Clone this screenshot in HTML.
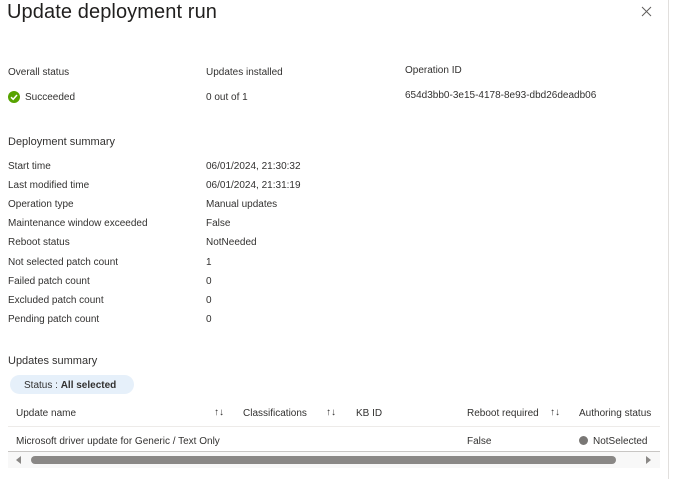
<!DOCTYPE html>
<html><head><style>
body{margin:0;width:678px;height:479px;background:#fff;font-family:"Liberation Sans",sans-serif;color:#323130;position:relative;overflow:hidden}
.a{position:absolute;font-size:10px;white-space:nowrap;margin-top:1px}
.h{font-size:11px;font-weight:normal}
</style></head><body>
<div style="position:absolute;left:668px;top:0;width:1px;height:479px;background:#e1dfdd"></div>
<div class="a" style="left:7px;top:0px;font-size:20px;color:#201f1e;letter-spacing:0.1px">Update deployment run</div>
<svg style="position:absolute;left:641px;top:6px" width="11" height="11"><path d="M1 1L10 10M10 1L1 10" stroke="#605e5c" stroke-width="1"/></svg>
<div class="a" style="left:8px;top:66px">Overall status</div>
<div class="a" style="left:206px;top:66px">Updates installed</div>
<div class="a" style="left:405px;top:64px">Operation ID</div>
<svg style="position:absolute;left:8px;top:91px" width="12" height="12"><circle cx="6" cy="6" r="6" fill="#57a300"/><path d="M3 6.2L5.2 8.3L9 4" stroke="#fff" stroke-width="1.5" fill="none"/></svg>
<div class="a" style="left:25px;top:91px">Succeeded</div>
<div class="a" style="left:206px;top:91px">0 out of 1</div>
<div class="a" style="left:405px;top:89px">654d3bb0-3e15-4178-8e93-dbd26deadb06</div>
<div class="a h" style="left:8px;top:135px">Deployment summary</div>
<div class="a" style="left:8px;top:160px">Start time</div><div class="a" style="left:206px;top:160px">06/01/2024, 21:30:32</div>
<div class="a" style="left:8px;top:179px">Last modified time</div><div class="a" style="left:206px;top:179px">06/01/2024, 21:31:19</div>
<div class="a" style="left:8px;top:198px">Operation type</div><div class="a" style="left:206px;top:198px">Manual updates</div>
<div class="a" style="left:8px;top:217px">Maintenance window exceeded</div><div class="a" style="left:206px;top:217px">False</div>
<div class="a" style="left:8px;top:236px">Reboot status</div><div class="a" style="left:206px;top:236px">NotNeeded</div>
<div class="a" style="left:8px;top:256px">Not selected patch count</div><div class="a" style="left:206px;top:256px">1</div>
<div class="a" style="left:8px;top:275px">Failed patch count</div><div class="a" style="left:206px;top:275px">0</div>
<div class="a" style="left:8px;top:294px">Excluded patch count</div><div class="a" style="left:206px;top:294px">0</div>
<div class="a" style="left:8px;top:313px">Pending patch count</div><div class="a" style="left:206px;top:313px">0</div>
<div class="a h" style="left:8px;top:354px">Updates summary</div>
<div style="position:absolute;left:10px;top:375px;width:124px;height:19px;border-radius:10px;background:#e6f0fa"></div>
<div class="a" style="left:24px;top:379px">Status : <b>All selected</b></div>
<div class="a" style="left:16px;top:407px">Update name</div>
<div class="a" style="left:214px;top:406px">↑↓</div>
<div class="a" style="left:243px;top:407px">Classifications</div>
<div class="a" style="left:326px;top:406px">↑↓</div>
<div class="a" style="left:356px;top:407px">KB ID</div>
<div class="a" style="left:467px;top:407px">Reboot required</div>
<div class="a" style="left:550px;top:406px">↑↓</div>
<div class="a" style="left:579px;top:407px">Authoring status</div>
<div style="position:absolute;left:8px;top:426px;width:652px;height:1px;background:#edebe9"></div>
<div class="a" style="left:16px;top:435px">Microsoft driver update for Generic / Text Only</div>
<div class="a" style="left:467px;top:435px">False</div>
<div style="position:absolute;left:579px;top:436px;width:9px;height:9px;border-radius:50%;background:#797775"></div>
<div class="a" style="left:593px;top:435px">NotSelected</div>
<div style="position:absolute;left:8px;top:451px;width:652px;height:1px;background:#c8c6c4"></div>
<div style="position:absolute;left:8px;top:452px;width:652px;height:16px;background:#f8f8f8"></div>
<svg style="position:absolute;left:14px;top:455px" width="8" height="10"><path d="M7 1L2 5L7 9Z" fill="#8a8886"/></svg>
<div style="position:absolute;left:31px;top:456px;width:585px;height:8px;border-radius:4px;background:#8a8886"></div>
<svg style="position:absolute;left:645px;top:455px" width="8" height="10"><path d="M1 1L6 5L1 9Z" fill="#8a8886"/></svg>
</body></html>
